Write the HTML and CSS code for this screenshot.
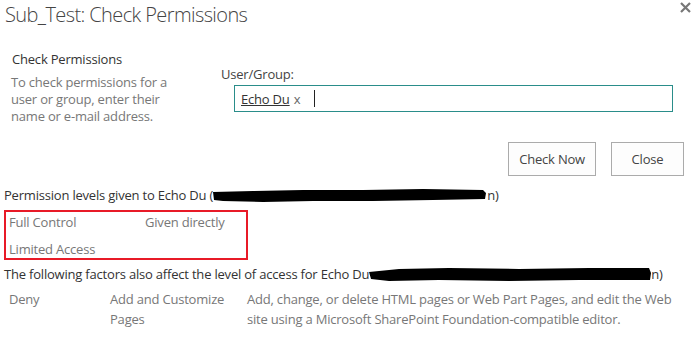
FILE: index.html
```html
<!DOCTYPE html>
<html lang="en">
<head>
  <meta charset="UTF-8" />
  <title>Sub_Test: Check Permissions</title>
  <link rel="stylesheet" href="styles.css">
</head>
<body>
  <div class="dialog-header">
    <h1 class="dialog-title">Sub_Test: Check Permissions</h1>
    <svg class="dialog-close" width="11" height="11" viewBox="0 0 11 11">
      <path d="M1 1 L10 10 M10 1 L1 10" stroke="#777" stroke-width="2.2" />
    </svg>
  </div>

  <div class="check-section">
    <div class="section-info">
      <h3 class="section-title">Check Permissions</h3>
      <p class="section-desc">To check permissions for a user or group, enter their name or e-mail address.</p>
    </div>
    <div class="section-field">
      <label class="field-label">User/Group:</label>
      <div class="people-picker">
        <span class="picked-user">Echo Du</span>
        <span class="picked-remove">x</span>
        <span class="caret"></span>
      </div>
    </div>
  </div>

  <div class="buttons">
    <button class="btn">Check Now</button>
    <button class="btn btn-close">Close</button>
  </div>

  <div class="result">
    <p class="result-line">Permission levels given to Echo Du (<svg class="redacted" width="274" height="15" viewBox="0 0 274 15" preserveAspectRatio="none"><path d="M0 4 L40 3 L90 2 L150 2 L210 1 L270 2 L273 5 L272 11 L220 12 L160 13 L100 13 L50 14 L10 13 L1 12 Z" fill="#000" /></svg>n)</p>
    <table class="levels">
      <tr><td class="lvl-name">Full Control</td><td>Given directly</td></tr>
      <tr class="last-row"><td class="lvl-name">Limited Access</td><td></td></tr>
    </table>
    <p class="result-line">The following factors also affect the level of access for Echo Du<svg class="redacted" width="282" height="15" viewBox="0 0 282 15" preserveAspectRatio="none"><path d="M0 5 L30 2 L80 1 L150 2 L220 1 L280 1 L282 6 L281 13 L210 13 L140 14 L70 13 L20 14 L2 12 Z" fill="#000" /></svg>n)</p>
    <table class="factors">
      <tr>
        <td class="f-type">Deny</td>
        <td class="f-perm">Add and Customize Pages</td>
        <td class="f-desc">Add, change, or delete HTML pages or Web Part Pages, and edit the Web site using a Microsoft SharePoint Foundation-compatible editor.</td>
      </tr>
    </table>
  </div>
</body>
</html>
```

FILE: styles.css
```css
body {
  margin: 0;
  background-color: #fff;
  color: #444;
  font-family: "Open Sans", "Noto Sans", sans-serif;
  font-size: 13px;
  letter-spacing: -0.2px;
}

.dialog-header {
  display: flex;
  justify-content: space-between;
  align-items: flex-start;
  padding: 0 3px 0 5px;
}

.dialog-title {
  margin: 0;
  font-size: 20px;
  font-weight: 300;
  letter-spacing: -0.6px;
  line-height: 30px;
  color: #444;
}

.dialog-close {
  margin-top: 2px;
}

.check-section {
  display: flex;
  padding-top: 20px;
}

.section-info {
  width: 165px;
  padding-left: 11px;
  margin-right: 45px;
}

.section-title {
  margin: 0 0 6px 1px;
  font-size: 13px;
  font-weight: normal;
  color: #333;
  line-height: 18px;
}

.section-desc {
  margin: 0;
  color: #777;
  line-height: 17px;
}

.section-field {
  flex: 1;
  padding-top: 16px;
}

.field-label {
  display: block;
  line-height: 17px;
  color: #444;
}

.people-picker {
  display: flex;
  align-items: center;
  margin: 2px 21px 0 13px;
  height: 25px;
  border: 1px solid #2a8d8a;
  padding: 0 6px;
}

.picked-user {
  color: #333;
  text-decoration: underline;
}

.picked-remove {
  margin-left: 4px;
  color: #666;
}

.caret {
  width: 1px;
  height: 17px;
  margin-left: 14px;
  background-color: #222;
}

.buttons {
  display: flex;
  justify-content: flex-end;
  gap: 15px;
  padding: 17px 10px 0 0;
}

.btn {
  height: 34px;
  padding: 0 10px;
  min-width: 73px;
  background-color: #fdfdfd;
  border: 1px solid #ababab;
  font-family: inherit;
  font-size: 13px;
  letter-spacing: inherit;
  color: #444;
}

.result {
  padding: 10px 4px 0 4px;
}

.result-line {
  margin: 0;
  color: #333;
  line-height: 18px;
}

.redacted {
  vertical-align: -3px;
}

.levels {
  width: 244px;
  margin: 6px 0 5px 0;
  border: 2px solid #e81a27;
  border-collapse: collapse;
  color: #777;
}

.levels td {
  padding: 1px 3px 8px 3px;
  line-height: 18px;
}

.levels .last-row td {
  padding-bottom: 0;
}

.lvl-name {
  width: 130px;
}

.factors {
  width: 690px;
  table-layout: fixed;
  margin-top: 6px;
  border-collapse: collapse;
  color: #777;
}

.factors td {
  vertical-align: top;
  padding: 0 5px;
  line-height: 20px;
}

.f-type {
  width: 91px;
}

.f-perm {
  width: 127px;
}

.f-desc {
  padding-right: 0;
}
```
